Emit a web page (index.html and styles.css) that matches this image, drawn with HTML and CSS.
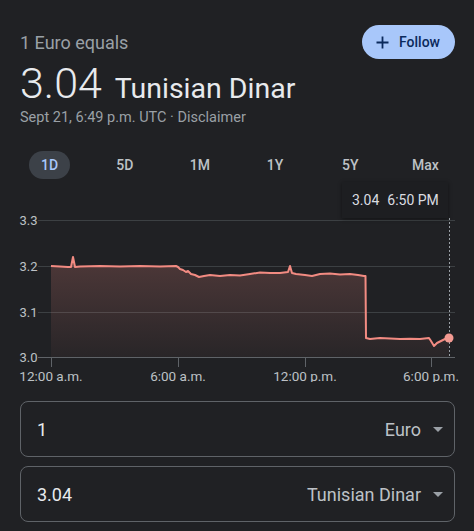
FILE: index.html
```html
<!DOCTYPE html>
<html lang="en">
<head>
<meta charset="utf-8">
<title>Euro to Tunisian Dinar</title>
<link rel="stylesheet" href="styles.css">
</head>
<body>
<main class="page">
  <section class="header">
    <div class="summary">
      <div class="equals">1 Euro equals</div>
      <div class="rate"><span class="rate-value">3.04</span><span class="rate-unit">Tunisian Dinar</span></div>
      <div class="meta">Sept 21, 6:49 p.m. UTC · Disclaimer</div>
    </div>
    <button class="follow">
      <svg class="plus" width="13" height="13" viewBox="0 0 13 13"><path d="M6.5 0.5v12M0.5 6.5h12" stroke="#0b2a5c" stroke-width="1.8" fill="none"/></svg>
      <span>Follow</span>
    </button>
  </section>

  <nav class="tabs">
    <span class="tab active">1D</span>
    <span class="tab">5D</span>
    <span class="tab">1M</span>
    <span class="tab">1Y</span>
    <span class="tab">5Y</span>
    <span class="tab">Max</span>
  </nav>

  <section class="chart">
    <svg class="chart-svg" width="474" height="200" viewBox="0 183 474 200">
      <defs>
        <linearGradient id="fillGrad" x1="0" y1="258" x2="0" y2="358" gradientUnits="userSpaceOnUse">
          <stop offset="0" stop-color="#f28b82" stop-opacity="0.22"/>
          <stop offset="1" stop-color="#f28b82" stop-opacity="0.04"/>
        </linearGradient>
      </defs>
      <g class="grid">
        <line x1="38" y1="221.5" x2="455" y2="221.5"/>
        <line x1="38" y1="267.5" x2="455" y2="267.5"/>
        <line x1="38" y1="313.5" x2="455" y2="313.5"/>
      </g>
      <g class="ylabels">
        <text x="19.5" y="226">3.3</text>
        <text x="19.5" y="272">3.2</text>
        <text x="19.5" y="318">3.1</text>
        <text x="19.5" y="363">3.0</text>
      </g>
      <path class="area" d="M51,267 L60,267.5 L68,268 L71,268 L73,258 L75,268 L80,267.5 L100,267 L120,267.5 L140,267 L160,267.5 L176,267 L178,268 L180,270 L183,271 L186,273 L188,272 L191,275 L195,276 L199,278 L204,277 L210,276 L220,277 L230,276 L240,276.5 L250,275 L260,273.5 L270,274 L280,274 L288,273 L290,267 L292,274 L296,275 L305,276 L312,277 L320,275 L330,274.5 L340,275.5 L350,275 L358,276 L364,277 L365.5,277 L366,339 L370,340 L380,339 L390,339.5 L400,340 L410,339.8 L420,340 L429,339 L431,342 L434,347 L437,344 L441,342 L445,340 L449,339 L449,358 L51,358 Z"/>
      <line class="baseline" x1="38" y1="358.5" x2="455" y2="358.5"/>
      <g class="ticks">
        <line x1="51.5" y1="358" x2="51.5" y2="368"/>
        <line x1="178.5" y1="358" x2="178.5" y2="368"/>
        <line x1="305.5" y1="358" x2="305.5" y2="368"/>
        <line x1="431.5" y1="358" x2="431.5" y2="368"/>
      </g>
      <line class="cursor" x1="449.5" y1="219" x2="449.5" y2="358"/>
      <path class="line" d="M51,267 L60,267.5 L68,268 L71,268 L73,258 L75,268 L80,267.5 L100,267 L120,267.5 L140,267 L160,267.5 L176,267 L178,268 L180,270 L183,271 L186,273 L188,272 L191,275 L195,276 L199,278 L204,277 L210,276 L220,277 L230,276 L240,276.5 L250,275 L260,273.5 L270,274 L280,274 L288,273 L290,267 L292,274 L296,275 L305,276 L312,277 L320,275 L330,274.5 L340,275.5 L350,275 L358,276 L364,277 L365.5,277 L366,339 L370,340 L380,339 L390,339.5 L400,340 L410,339.8 L420,340 L429,339 L431,342 L434,347 L437,344 L441,342 L445,340 L449,339"/>
      <circle class="dot" cx="449" cy="339" r="4.5"/>
      <g class="xlabels">
        <text x="51" y="381.5">12:00 a.m.</text>
        <text x="178" y="381.5">6:00 a.m.</text>
        <text x="305" y="381.5">12:00 p.m.</text>
        <text x="431" y="381.5">6:00 p.m.</text>
      </g>
    </svg>
    <div class="tooltip"><span>3.04</span><span>6:50 PM</span></div>
  </section>

  <section class="converter">
    <div class="field">
      <span class="amount">1</span>
      <span class="currency">Euro<span class="caret"></span></span>
    </div>
    <div class="field">
      <span class="amount">3.04</span>
      <span class="currency">Tunisian Dinar<span class="caret"></span></span>
    </div>
  </section>
</main>
</body>
</html>
```

FILE: styles.css
```css
html, body {
  margin: 0;
  padding: 0;
  background: #202124;
}
body {
  font-family: Roboto, "Liberation Sans", Arial, sans-serif;
  color: #e8eaed;
  width: 474px;
  height: 531px;
  overflow: hidden;
}
.page {
  display: flex;
  flex-direction: column;
}
.header {
  display: flex;
  justify-content: space-between;
  align-items: flex-start;
  padding: 30px 19px 0 20px;
}
.summary {
  display: flex;
  flex-direction: column;
}
.equals {
  font-size: 18px;
  line-height: 25px;
  color: #9aa0a6;
}
.rate {
  margin-top: 5px;
  height: 47px;
  display: flex;
  align-items: baseline;
  white-space: nowrap;
}
.rate-value {
  font-size: 43px;
  line-height: 47px;
  font-weight: 300;
  color: #e8eaed;
}
.rate-unit {
  font-size: 28.5px;
  line-height: 30px;
  margin-left: 13px;
  color: #e8eaed;
}
.meta {
  font-size: 14.5px;
  line-height: 21px;
  color: #9aa0a6;
}
.follow {
  margin-top: -5px;
  display: flex;
  align-items: center;
  gap: 10px;
  height: 34px;
  padding: 0 15px 0 14px;
  border: none;
  border-radius: 17px;
  background: #a8c7fa;
  color: #0b2a5c;
  font-family: Roboto, "Liberation Sans", Arial, sans-serif;
  font-size: 14px;
  font-weight: 500;
}
.plus {
  display: block;
}
.tabs {
  display: grid;
  grid-template-columns: repeat(6, 1fr);
  margin: 23px 11px 0 12px;
  height: 28px;
  align-items: center;
  justify-items: center;
}
.tab {
  font-size: 14px;
  font-weight: 500;
  color: #bdc1c6;
  line-height: 28px;
}
.tab.active {
  background: #3c4148;
  color: #a8c7fa;
  border-radius: 14px;
  width: 41px;
  text-align: center;
}
.chart {
  position: relative;
  margin-top: 3px;
  height: 200px;
}
.chart-svg {
  display: block;
}
.grid line {
  stroke: #3c4043;
  stroke-width: 1;
}
.baseline {
  stroke: #5f6368;
  stroke-width: 1;
}
.ticks line {
  stroke: #5f6368;
  stroke-width: 1;
}
.ylabels text {
  font-family: Roboto, "Liberation Sans", Arial, sans-serif;
  font-size: 13px;
  fill: #bdc1c6;
}
.xlabels text {
  font-family: Roboto, "Liberation Sans", Arial, sans-serif;
  font-size: 13.5px;
  fill: #bdc1c6;
  text-anchor: middle;
}
.area {
  fill: url(#fillGrad);
}
.line {
  fill: none;
  stroke: #f28b82;
  stroke-width: 2;
  stroke-linejoin: round;
}
.dot {
  fill: #f39a92;
}
.cursor {
  stroke: #9aa0a6;
  stroke-width: 1;
  stroke-dasharray: 2 2;
}
.tooltip {
  position: absolute;
  left: 342px;
  top: 0;
  width: 106px;
  height: 36px;
  box-sizing: border-box;
  padding-left: 10px;
  display: flex;
  align-items: center;
  gap: 8px;
  background: #1d1e21;
  box-shadow: 0 1px 4px rgba(0, 0, 0, 0.45);
  font-size: 14px;
  color: #dadce0;
}
.converter {
  display: flex;
  flex-direction: column;
  gap: 9px;
  margin: 19px 19px 0 20px;
}
.field {
  height: 56px;
  box-sizing: border-box;
  border: 1px solid #5f6368;
  border-radius: 8px;
  display: flex;
  align-items: center;
  justify-content: space-between;
  padding: 0 11px 0 16px;
  font-size: 18px;
}
.amount {
  color: #e8eaed;
}
.currency {
  display: flex;
  align-items: center;
  gap: 12px;
  color: #bdc1c6;
}
.caret {
  width: 0;
  height: 0;
  border-left: 5px solid transparent;
  border-right: 5px solid transparent;
  border-top: 5px solid #9aa0a6;
}
```
